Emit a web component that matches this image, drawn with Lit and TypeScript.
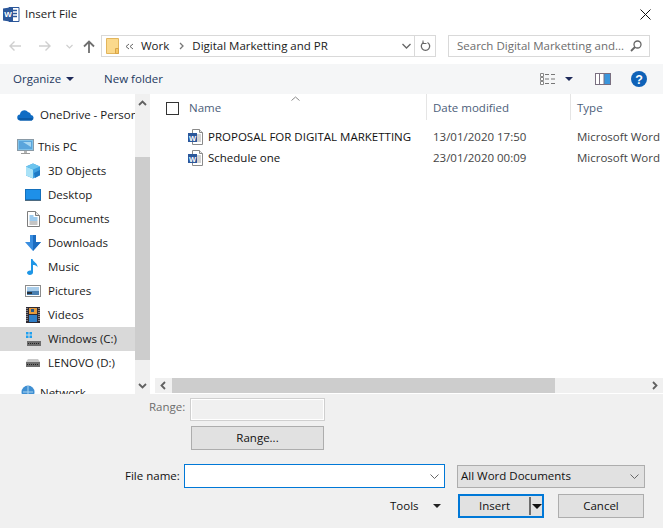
import { LitElement, html, css } from "lit";
import { customElement } from "lit/decorators.js";

const chev = (d: string, c = "#606060") => html`<svg width="9" height="9" viewBox="0 0 9 9"><path d=${d} fill="none" stroke=${c} stroke-width="1.8"/></svg>`;

const wordBig = html`<svg width="17" height="17" viewBox="0 0 17 17"><path d="M6 1.500h10v14H6z" fill="#fff" stroke="#2b579a"/><path d="M10 4.500h4M10 7.500h4M10 10.500h4" stroke="#2b579a" stroke-width="1.400"/><path d="M0 2.500l10-1.500v15L0 14.500z" fill="#2b579a"/><text x="1.300" y="11" font-size="8" font-weight="700" fill="#fff" font-family="Liberation Sans">W</text></svg>`;
const wordDoc = html`<svg width="16" height="16" viewBox="0 0 16 16"><path d="M4.500.5h7l3 3v12h-10z" fill="#fff" stroke="#8a8a8a"/><path d="M11.500.5v3h3" fill="#e8e8e8" stroke="#8a8a8a"/><path d="M9 6h4M9 8h4M9 10h4M9 12h4" stroke="#a8a8a8"/><rect x="0" y="4" width="9" height="9" fill="#2b579a"/><text x="1" y="11.500" font-size="7.500" font-weight="700" fill="#fff" font-family="Liberation Sans">W</text></svg>`;

const navIcons: Record<string, unknown> = {
  onedrive: html`<svg width="17" height="12" viewBox="0 0 17 12"><path d="M3.500 11.500a3 3 0 0 1-.5-6 4.500 4.500 0 0 1 8-2.500 3.500 3.500 0 0 1 3 3 2.800 2.800 0 0 1 .5 5.500z" fill="#0f6cc4"/><path d="M1 9h15l-1 2.500H3z" fill="#0a5aa8"/></svg>`,
  pc: html`<svg width="18" height="16" viewBox="0 0 18 16"><rect x=".5" y=".5" width="16" height="11" fill="#7fc2ea" stroke="#8a9aa6"/><path d="M2 2h13v8H2z" fill="#5aa5dc"/><path d="M6 3h8v5z" fill="#a9d8f2"/><path d="M7 12h3v2H7z" fill="#b5b5b5"/><path d="M4 14.500h9" stroke="#9a9a9a"/></svg>`,
  cube: html`<svg width="16" height="16" viewBox="0 0 16 16"><path d="M8 .5l7 3v9l-7 3-7-3v-9z" fill="#3c9fe0"/><path d="M1 3.500l7 3v9l-7-3z" fill="#a9e2f7"/><path d="M8 .5l7 3-7 3-7-3z" fill="#6cc4ee"/><path d="M9 10l6-3v5l-5 3z" fill="#1c78c4"/></svg>`,
  desktop: html`<svg width="16" height="12" viewBox="0 0 16 12"><rect x=".5" y=".5" width="15" height="10" fill="#1e90e8" stroke="#1470bc"/><path d="M0 11h16v1H0z" fill="#4d6a80"/></svg>`,
  docs: html`<svg width="13" height="16" viewBox="0 0 13 16"><path d="M.5.5h8l4 4v11H.5z" fill="#fff" stroke="#7d7d7d"/><path d="M8.500.5v4h4" fill="#e4e4e4" stroke="#7d7d7d"/><path d="M2.500 5h4M2.500 7h8M2.500 9h8" stroke="#3a96dc"/><path d="M2.500 11h8M2.500 13h8" stroke="#8a8a8a"/></svg>`,
  downloads: html`<svg width="16" height="16" viewBox="0 0 16 16"><path d="M5 0h6v7h5l-8 9-8-9h5z" fill="#3a8ee0"/><path d="M8 0h3v7h5l-8 9z" fill="#1c6cc0"/></svg>`,
  music: html`<svg width="12" height="16" viewBox="0 0 12 16"><path d="M4 0h1.500c.5 3 5.500 4 5 8.500C10 6.500 7.500 6 6 6v7.500C6 15 4.500 16 2.800 16 1.200 16 0 15 0 13.800 0 12.500 1.500 11.500 3 11.500c.4 0 .7 0 1 .1z" fill="#1e96e6"/></svg>`,
  pictures: html`<svg width="16" height="12" viewBox="0 0 16 12"><rect x=".5" y=".5" width="15" height="11" fill="#fff" stroke="#8c8c8c"/><path d="M2 2h12v4H2z" fill="#a9cdea"/><path d="M2 6h12v4H2z" fill="#4a7fb0"/><path d="M2 7h5v2H2z" fill="#26323c"/></svg>`,
  videos: html`<svg width="14" height="16" viewBox="0 0 14 16"><rect width="14" height="16" fill="#2e2a33"/><path d="M3 1h8v6H3z" fill="#e49a3c"/><path d="M3 8h8v7H3z" fill="#2f7fc8"/><path d="M5 2h3v3H5z" fill="#24588c"/><path d="M1 1v14M13 1v14" stroke="#d8d8d8" stroke-dasharray="1 1"/></svg>`,
  windows: html`<svg width="16" height="14" viewBox="0 0 16 14"><path d="M1 0h2.500v2.500H1zM4.500 0H7v2.500H4.500zM1 3.500h2.500V6H1zM4.500 3.500H7V6H4.500z" fill="#1ea0f0"/><rect x="2" y="9" width="14" height="5" fill="#6d6d6d"/><path d="M3 11.500h11" stroke="#222" stroke-dasharray="1 1"/></svg>`,
  drive: html`<svg width="14" height="8" viewBox="0 0 14 8"><path d="M2 0h10l2 3H0z" fill="#c8c8c8"/><rect y="3" width="14" height="5" fill="#6d6d6d"/><path d="M1 5.500h11" stroke="#222" stroke-dasharray="1 1"/></svg>`,
  network: html`<svg width="18" height="16" viewBox="0 0 18 16"><circle cx="10" cy="7" r="6.500" fill="#3f8fd2"/><path d="M5 7h10M10 1v12" stroke="#a9d4f2"/><path d="M0 9h7v5H0z" fill="#1c6cc0"/></svg>`,
};

const tree: [string, string, string][] = [
  ["cube", "3D Objects", ""],
  ["desktop", "Desktop", ""],
  ["docs", "Documents", ""],
  ["downloads", "Downloads", ""],
  ["music", "Music", ""],
  ["pictures", "Pictures", ""],
  ["videos", "Videos", ""],
  ["windows", "Windows (C:)", "sel"],
  ["drive", "LENOVO (D:)", ""],
];

@customElement("app-root")
export class AppRoot extends LitElement {
  static styles = css`
    :host { display: block; width: 663px; height: 528px; background: #fff; overflow: hidden;
      font: 11.5px/16px "Open Sans", "Noto Sans", sans-serif; color: #1a1a1a; }
    * { box-sizing: border-box; }
    svg { display: block; flex: none; }
    .title { height: 30px; display: flex; align-items: center; padding: 0 12px 2px 3px; }
    .title span { margin-left: 5px; flex: 1; }
    .nav { height: 34px; display: flex; align-items: flex-start; padding-top: 5px; }
    .nav-btns { width: 101px; height: 22px; display: flex; align-items: center; padding-left: 8px; }
    .addr { width: 335px; height: 22px; border: 1px solid #d9d9d9; display: flex; align-items: center; padding-left: 4px; }
    .addr .crumb { display: flex; align-items: center; flex: 1; }
    .refresh { width: 21px; height: 20px; border-left: 1px solid #d9d9d9; display: flex; align-items: center; justify-content: center; }
    .search { width: 202px; height: 22px; margin-left: 12px; border: 1px solid #d9d9d9; display: flex; align-items: center; justify-content: space-between; padding: 0 7px 0 8px; color: #6d6d6d; white-space: nowrap; }
    .toolbar { height: 30px; background: #f5f6f7; display: flex; align-items: center; color: #1e3a5f; padding-left: 13px; }
    .caret { width: 0; height: 0; border: 4px solid transparent; border-top: 4px solid #1e2a5a; border-bottom: 0; }
    .main { height: 300px; display: flex; }
    .side { width: 135px; height: 300px; overflow: hidden; padding-top: 9px; }
    .row { height: 24px; display: flex; align-items: center; white-space: nowrap; overflow: hidden; }
    .row.sel { background: #d9d9d9; }
    .row .ic { width: 16px; display: flex; justify-content: center; margin-right: 7px; flex: none; }
    .child { padding-left: 25px; }
    .top { padding-left: 17px; }
    .vs { width: 15px; height: 300px; background: #f0f0f0; display: flex; flex-direction: column; align-items: center; }
    .vs .btn { height: 18px; width: 15px; flex: none; display: flex; align-items: center; justify-content: center; }
    .vs .thumb { width: 15px; height: 203px; margin-top: 45px; background: #cdcdcd; }
    .vs .btn.down { margin-top: 16px; }
    .sidewrap { display: flex; height: 300px; }
    .gap { width: 5px; height: 300px; background: #fff; }
    .list { width: 508px; height: 300px; display: flex; flex-direction: column; }
    .listbody { height: 284px; background: #fff; overflow: hidden; }
    .head { height: 26px; display: flex; color: #4c607a; }
    .th { height: 26px; display: flex; align-items: center; padding: 2px 0 0 6px; border-right: 1px solid #e5e5e5; position: relative; }
    .th.name { width: 272px; padding-left: 11px; }
    .th.date { width: 144px; }
    .th.type { flex: 1; border: 0; }
    .box { width: 13px; height: 13px; border: 1px solid #333; margin-right: 10px; flex: none; }
    .sort { position: absolute; left: 136px; top: 2px; }
    .file { height: 21px; display: flex; align-items: center; white-space: nowrap; color: #111; }
    .file .n { width: 278px; padding-left: 33px; display: flex; align-items: center; gap: 4px; }
    .file .d { width: 144px; color: #444; }
    .file .t { color: #444; overflow: hidden; }
    .files { padding-top: 6px; }
    .hs { height: 15px; display: flex; background: #f0f0f0; }
    .hs .b { width: 17px; display: flex; align-items: center; justify-content: center; flex: none; }
    .hs .thumb { width: 383px; background: #cdcdcd; }
    .hs .sp { flex: 1; }
    .bottom { height: 134px; background: #f0f0f0; display: flex; flex-direction: column; }
    .r1 { display: flex; align-items: center; margin-top: 4px; height: 23px; color: #6d6d6d; }
    .r1 span { margin: -6px 0 0 149px; width: 41px; }
    .r1 i { display: block; width: 135px; height: 23px; border: 1px solid #cfcfcf; box-shadow: inset 0 0 0 1px #fff; background: #f0f0f0; }
    .rangebtn { margin: 5px 0 0 191px; width: 133px; height: 24px; background: #e1e1e1; border: 1px solid #adadad; text-align: center; line-height: 22px; color: #111; }
    .r3 { display: flex; margin-top: 14px; height: 24px; align-items: center; color: #111; }
    .r3 .lbl { margin-left: 125px; width: 59px; }
    .input { width: 261px; height: 24px; border: 1px solid #0078d7; background: #fff; display: flex; align-items: center; justify-content: flex-end; padding-right: 5px; }
    .select { margin-left: 12px; width: 188px; height: 23px; border: 1px solid #adadad; background: #e1e1e1; display: flex; align-items: center; justify-content: space-between; padding: 0 5px 0 3px; }
    .r4 { display: flex; margin-top: 6px; height: 24px; align-items: center; color: #111; }
    .tools { margin-left: 390px; width: 68px; display: flex; align-items: center; }
    .tools span { width: 43px; }
    .caret.k { border-top-color: #222; border-width: 4px 4px 0; }
    .insert { width: 86px; height: 24px; border: 2px solid #0078d7; background: #e1e1e1; display: flex; align-items: center; }
    .insert span { width: 69px; text-align: center; }
    .insert i { display: block; width: 2px; height: 18px; background: #6d6d6d; margin-right: 1px; }
    .cancel { margin-left: 14px; width: 86px; height: 24px; border: 1px solid #adadad; background: #e1e1e1; text-align: center; line-height: 22px; }
    .x { flex: none !important; margin: 0; }
  `;

  private rowEl(icon: string, label: string, cls: string) {
    return html`<div class="row ${cls}"><span class="ic">${navIcons[icon]}</span>${label}</div>`;
  }

  render() {
    return html`
      <div class="title">
        ${wordBig}<span>Insert File</span>
        <svg class="x" width="11" height="11" viewBox="0 0 11 11"><path d="M.5.5l10 10M10.500.5l-10 10" stroke="#111"/></svg>
      </div>
      <div class="nav">
        <div class="nav-btns">
          <svg width="14" height="12" viewBox="0 0 14 12"><path d="M13 6H2M6.500 1.500L2 6l4.500 4.500" fill="none" stroke="#cfcfcf" stroke-width="1.400"/></svg>
          <svg style="margin-left:16px" width="14" height="12" viewBox="0 0 14 12"><path d="M1 6h11M7.500 1.500L12 6l-4.500 4.500" fill="none" stroke="#cfcfcf" stroke-width="1.400"/></svg>
          <svg style="margin-left:14px" width="7" height="5" viewBox="0 0 7 5"><path d="M.5 1l3 3 3-3" fill="none" stroke="#cfcfcf" stroke-width="1.200"/></svg>
          <svg style="margin-left:10px" width="12" height="13" viewBox="0 0 12 13"><path d="M6 13V2M1 6.500L6 1.500l5 5" fill="none" stroke="#6f6f6f" stroke-width="1.800"/></svg>
        </div>
        <div class="addr">
          <div class="crumb">
            <svg width="13" height="16" viewBox="0 0 13 16"><path d="M.5.5h12v15H.5z" fill="#fbd98c" stroke="#e2b55c"/><path d="M9.500 10.500h3v5h-3z" fill="#f6c868" stroke="#d8a548"/></svg>
            <svg style="margin-left:6px" width="9" height="7" viewBox="0 0 9 7"><path d="M4 1L1 3.500 4 6M8 1L5 3.500 8 6" fill="none" stroke="#666"/></svg>
            <span style="margin-left:7px">Work</span>
            <svg style="margin-left:10px" width="5" height="8" viewBox="0 0 5 8"><path d="M1 1l3 3-3 3" fill="none" stroke="#777" stroke-width="1.300"/></svg>
            <span style="margin-left:8px">Digital Marketting and PR</span>
          </div>
          <svg style="margin-right:3px" width="9" height="6" viewBox="0 0 9 6"><path d="M.5 1l4 4 4-4" fill="none" stroke="#666" stroke-width="1.300"/></svg>
          <div class="refresh"><svg width="11" height="12" viewBox="0 0 11 12"><path d="M7.500 2.500a4.200 4.200 0 1 1-4 0" fill="none" stroke="#666" stroke-width="1.300"/><path d="M3 .5v3h3.500" fill="none" stroke="#666"/></svg></div>
        </div>
        <div class="search">
          <span>Search Digital Marketting and...</span>
          <svg width="12" height="12" viewBox="0 0 12 12"><circle cx="7.500" cy="4.500" r="3.500" fill="none" stroke="#666" stroke-width="1.300"/><path d="M5 7l-4 4" stroke="#666" stroke-width="1.800"/></svg>
        </div>
      </div>
      <div class="toolbar">
        <span>Organize</span><span class="caret" style="margin-left:5px"></span>
        <span style="margin-left:30px;width:436px">New folder</span>
        <svg width="16" height="12" viewBox="0 0 16 12"><path d="M.5.5h3v3h-3zM.5 4.500h3v3h-3zM.5 8.500h3v3h-3z" fill="#fff" stroke="#888"/><path d="M5 1.500h4M11 1.500h4M5 6h4M11 6h4M5 10.500h4M11 10.500h4" stroke="#777"/></svg>
        <span class="caret" style="margin-left:9px"></span>
        <svg style="margin-left:22px" width="16" height="12" viewBox="0 0 16 12"><rect x=".5" y=".5" width="15" height="11" fill="#fff" stroke="#7a6f80"/><rect x="9" y="1" width="6" height="10" fill="#3a96dc"/><path d="M4.500 1v10M9 1v10" stroke="#7a6f80"/></svg>
        <svg style="margin-left:20px" width="16" height="16" viewBox="0 0 16 16"><circle cx="8" cy="8" r="8" fill="#0f62b8"/><text x="8" y="12.500" text-anchor="middle" font-size="12.500" font-weight="700" fill="#fff" font-family="Liberation Sans">?</text></svg>
      </div>
      <div class="main">
        <div class="side">
          <div class="row top" style="margin-bottom:8px">
            <span class="ic">${navIcons.onedrive}</span>OneDrive - Personal
          </div>
          <div class="row top" style="padding-left:18px;margin-bottom:0">
            <span class="ic" style="margin-right:4px">${navIcons.pc}</span>This PC
          </div>
          ${tree.map(([i, l, c]) => this.rowEl(i, l, "child " + c))}
          <div class="row top" style="margin-top:6px;padding-left:19px">
            <span class="ic" style="margin-right:5px">${navIcons.network}</span>Network
          </div>
        </div>
        <div class="sidewrap">
          <div class="vs">
            <div class="btn">${chev("M1 6l3.500-3.500L8 6")}</div>
            <div class="thumb"></div>
            <div class="btn down">${chev("M1 3l3.500 3.500L8 3")}</div>
          </div>
          <div class="gap"></div>
        </div>
        <div class="list">
          <div class="listbody">
            <div class="head">
              <div class="th name"><span class="box"></span>Name
                <svg class="sort" width="9" height="5" viewBox="0 0 9 5"><path d="M.5 4.500l4-3.500 4 3.500" fill="none" stroke="#888"/></svg>
              </div>
              <div class="th date">Date modified</div>
              <div class="th type">Type</div>
            </div>
            <div class="files">
              <div class="file"><div class="n">${wordDoc}PROPOSAL FOR DIGITAL MARKETTING</div><div class="d">13/01/2020 17:50</div><div class="t">Microsoft Word</div></div>
              <div class="file"><div class="n">${wordDoc}Schedule one</div><div class="d">23/01/2020 00:09</div><div class="t">Microsoft Word</div></div>
            </div>
          </div>
          <div class="hs">
            <div class="b">${chev("M6 1L2.500 4.500 6 8")}</div>
            <div class="thumb"></div>
            <div class="sp"></div>
            <div class="b">${chev("M3 1l3.500 3.500L3 8")}</div>
          </div>
        </div>
      </div>
      <div class="bottom">
        <div class="r1"><span>Range:</span><i></i></div>
        <div class="rangebtn">Range...</div>
        <div class="r3">
          <div class="lbl">File name:</div>
          <div class="input"><svg width="9" height="5" viewBox="0 0 9 5"><path d="M.5.500l4 4 4-4" fill="none" stroke="#666"/></svg></div>
          <div class="select"><span>All Word Documents</span><svg width="9" height="5" viewBox="0 0 9 5"><path d="M.5.500l4 4 4-4" fill="none" stroke="#666"/></svg></div>
        </div>
        <div class="r4">
          <div class="tools"><span>Tools</span><i class="caret k"></i></div>
          <div class="insert"><span>Insert</span><i></i><b class="caret k" style="border-width:5px 5px 0;border-top-color:#111"></b></div>
          <div class="cancel">Cancel</div>
        </div>
      </div>
    `;
  }
}
